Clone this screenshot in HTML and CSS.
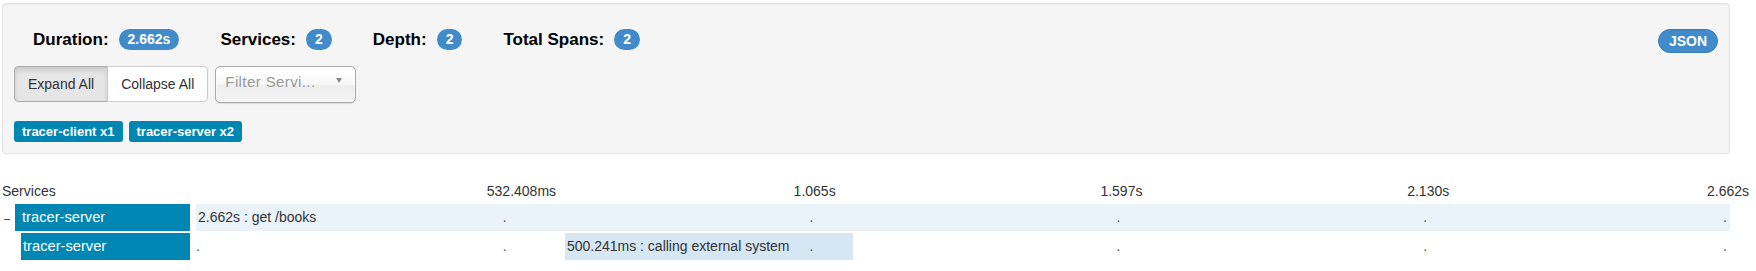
FILE: index.html
```html
<!DOCTYPE html>
<html>
<head>
<meta charset="utf-8">
<title>Trace</title>
<link rel="stylesheet" href="styles.css">
</head>
<body>
<div class="page">
  <div class="well">
    <div class="stats">
      <div class="stat"><b class="stat-label">Duration:</b><span class="badge">2.662s</span></div>
      <div class="stat"><b class="stat-label">Services:</b><span class="badge">2</span></div>
      <div class="stat"><b class="stat-label">Depth:</b><span class="badge">2</span></div>
      <div class="stat"><b class="stat-label">Total Spans:</b><span class="badge">2</span></div>
      <button class="json-btn">JSON</button>
    </div>
    <div class="controls">
      <div class="btn-group">
        <button class="btn active">Expand All</button>
        <button class="btn">Collapse All</button>
      </div>
      <div class="filter"><span class="placeholder">Filter Servi...</span><span class="caret"></span></div>
    </div>
    <div class="svc-badges">
      <span class="svc-badge">tracer-client x1</span>
      <span class="svc-badge">tracer-server x2</span>
    </div>
  </div>

  <div class="trace">
    <div class="trace-row header">
      <div class="handle">Services</div>
      <div class="duration">
        <span class="tick" style="left:20%">532.408ms</span>
        <span class="tick" style="left:40%">1.065s</span>
        <span class="tick" style="left:60%">1.597s</span>
        <span class="tick" style="left:80%">2.130s</span>
        <span class="tick last" style="left:100%">2.662s</span>
      </div>
    </div>

    <div class="trace-row span-row depth-1">
      <div class="handle"><span class="expander"><span class="minus">–</span></span><span class="svc">tracer-server</span></div>
      <div class="duration">
        <div class="bar root" style="left:0%;width:100%">2.662s : get /books</div>
        <span class="dot" style="left:20%">.</span>
        <span class="dot" style="left:40%">.</span>
        <span class="dot" style="left:60%">.</span>
        <span class="dot" style="left:80%">.</span>
        <span class="dot last" style="left:100%">.</span>
      </div>
    </div>

    <div class="trace-row span-row depth-2">
      <div class="handle"><span class="svc">tracer-server</span></div>
      <div class="duration">
        <div class="bar child" style="left:24.05%;width:18.79%">500.241ms : calling external system</div>
        <span class="dot" style="left:0%">.</span>
        <span class="dot" style="left:20%">.</span>
        <span class="dot" style="left:40%">.</span>
        <span class="dot" style="left:60%">.</span>
        <span class="dot" style="left:80%">.</span>
        <span class="dot last" style="left:100%">.</span>
      </div>
    </div>
  </div>
</div>
</body>
</html>
```
FILE: styles.css
```css
html, body {
  margin: 0;
  padding: 0;
  background: #fff;
}

body {
  font-family: "Liberation Sans", Arial, sans-serif;
  font-size: 14px;
  color: #333;
}

.page {
  width: 1728px;
  margin-left: 2px;
  padding-top: 3px;
}

/* ---------- summary panel ---------- */
.well {
  background: #f5f5f5;
  border: 1px solid #e3e3e3;
  border-radius: 4px;
  box-shadow: inset 0 1px 1px rgba(0, 0, 0, 0.05);
  padding: 25px 11px 11px 11px;
}

.stats {
  display: flex;
  align-items: flex-start;
  height: 24px;
  padding-left: 19px;
}

.stat {
  display: flex;
  align-items: flex-start;
  gap: 10px;
  margin-right: 41px;
}

.stat-label {
  font-size: 17px;
  font-weight: bold;
  line-height: 21px;
  color: #000;
}

.badge {
  background: #428bca;
  color: #fff;
  font-size: 14px;
  font-weight: bold;
  line-height: 15px;
  padding: 3px 9px;
  border-radius: 11px;
}

.json-btn {
  margin-left: auto;
  height: 24px;
  padding: 0 10px;
  border: 1px solid #357ebd;
  border-radius: 12px;
  background: #428bca;
  color: #fff;
  font-family: "Liberation Sans", Arial, sans-serif;
  font-size: 14px;
  font-weight: bold;
  line-height: 22px;
}

.controls {
  display: flex;
  align-items: flex-start;
  margin-top: 13px;
}

.btn-group {
  display: flex;
}

.btn {
  font-family: "Liberation Sans", Arial, sans-serif;
  font-size: 14px;
  line-height: 20px;
  padding: 7px 13px;
  border: 1px solid #ccc;
  background: #fff;
  color: #333;
}

.btn:first-child {
  border-radius: 4px 0 0 4px;
}

.btn:last-child {
  border-radius: 0 4px 4px 0;
  margin-left: -1px;
}

.btn.active {
  background: #e6e6e6;
  border-color: #adadad;
  box-shadow: inset 0 3px 5px rgba(0, 0, 0, 0.125);
}

.filter {
  box-sizing: border-box;
  width: 141px;
  height: 37px;
  margin-left: 7px;
  display: flex;
  align-items: flex-start;
  padding: 5px 13px 0 9px;
  border: 1px solid #aaa;
  border-radius: 5px;
  background: linear-gradient(#fff 20%, #f6f6f6 50%, #eee 52%, #f4f4f4 100%);
  box-shadow: inset 0 0 3px #fff, 0 1px 1px rgba(0, 0, 0, 0.1);
}

.placeholder {
  flex: 1;
  color: #999;
  font-size: 15px;
  letter-spacing: 0.4px;
  line-height: 20px;
  white-space: nowrap;
}

.caret {
  width: 0;
  height: 0;
  margin-top: 6px;
  border-left: 3px solid transparent;
  border-right: 3px solid transparent;
  border-top: 5px solid #888;
}

.svc-badges {
  display: flex;
  gap: 6px;
  margin-top: 18px;
}

.svc-badge {
  background: #0086b3;
  color: #fff;
  font-size: 13px;
  font-weight: bold;
  line-height: 15px;
  padding: 3px 8px;
  border-radius: 3px;
}

/* ---------- trace timeline ---------- */
.trace {
  margin-top: 27px;
}

.trace-row {
  display: flex;
}

.handle {
  box-sizing: border-box;
  width: 194px;
  flex: none;
  display: flex;
}

.duration {
  flex: 1;
  position: relative;
}

.header {
  height: 20px;
  line-height: 20px;
  margin-bottom: 3px;
}

.tick {
  position: absolute;
  top: 0;
  margin-left: -16px;
  white-space: nowrap;
}

.tick.last {
  margin-left: -23px;
}

.span-row {
  height: 27px;
  line-height: 27px;
  margin-bottom: 2px;
}

.span-row .handle {
  padding-right: 6px;
}

.depth-2 .handle {
  padding-left: 19px;
}

.expander {
  width: 13px;
  flex: none;
  padding-left: 2px;
  box-sizing: border-box;
}

.minus {
  font-size: 11px;
  color: #222;
}

.svc {
  flex: 1;
  background: #0086b3;
  color: #fff;
  font-size: 14.7px;
  padding-left: 7px;
  white-space: nowrap;
}

.depth-2 .svc {
  padding-left: 2px;
}

.bar {
  position: absolute;
  top: 0;
  bottom: 0;
  box-sizing: border-box;
  padding-left: 2px;
  white-space: nowrap;
  color: #333;
}

.bar.root {
  background: #ebf3fa;
}

.bar.child {
  background: #d6e7f3;
}

.dot {
  position: absolute;
  top: 0;
  color: #555;
}

.dot.last {
  margin-left: -7px;
}
```
